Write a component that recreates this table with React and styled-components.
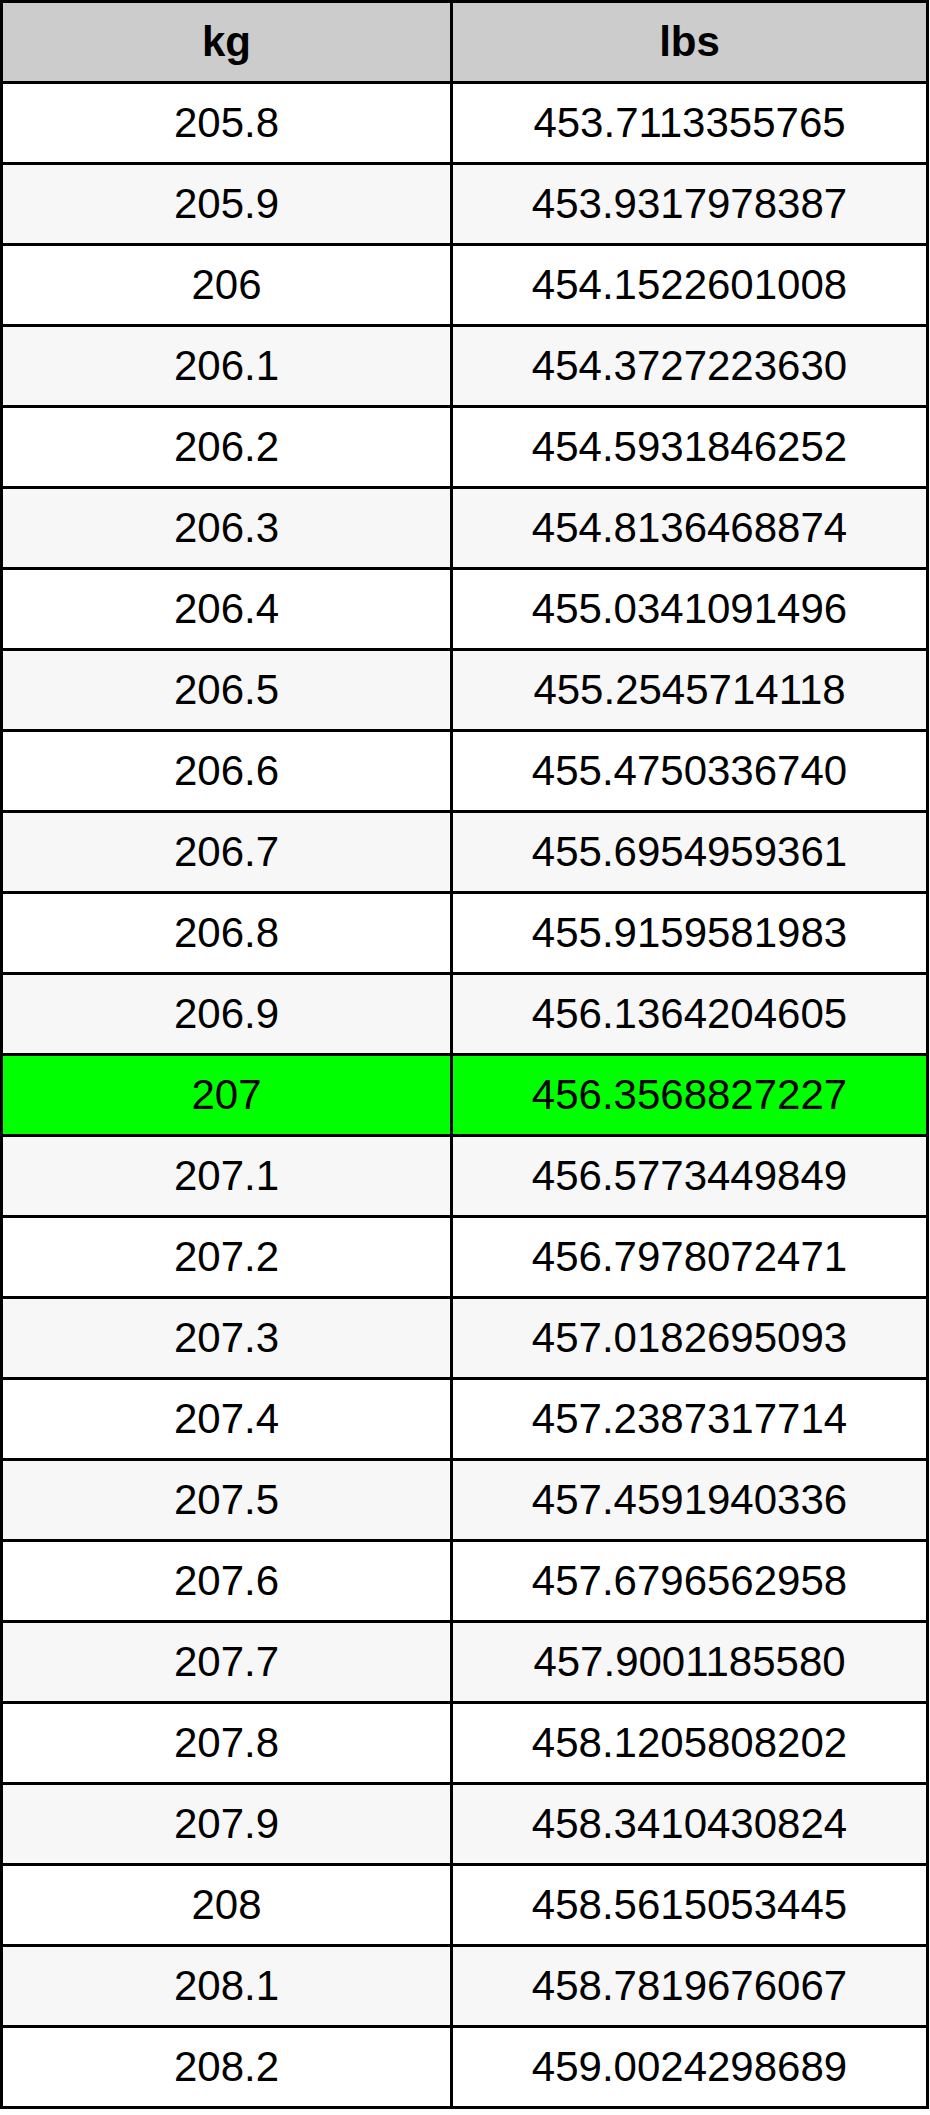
import styled, { createGlobalStyle } from 'styled-components';

const GlobalStyle = createGlobalStyle`
  html, body {
    margin: 0;
    padding: 0;
    background: #fff;
  }
`;

const rows = [
  ['205.8', '453.7113355765'],
  ['205.9', '453.9317978387'],
  ['206', '454.1522601008'],
  ['206.1', '454.3727223630'],
  ['206.2', '454.5931846252'],
  ['206.3', '454.8136468874'],
  ['206.4', '455.0341091496'],
  ['206.5', '455.2545714118'],
  ['206.6', '455.4750336740'],
  ['206.7', '455.6954959361'],
  ['206.8', '455.9159581983'],
  ['206.9', '456.1364204605'],
  ['207', '456.3568827227'],
  ['207.1', '456.5773449849'],
  ['207.2', '456.7978072471'],
  ['207.3', '457.0182695093'],
  ['207.4', '457.2387317714'],
  ['207.5', '457.4591940336'],
  ['207.6', '457.6796562958'],
  ['207.7', '457.9001185580'],
  ['207.8', '458.1205808202'],
  ['207.9', '458.3410430824'],
  ['208', '458.5615053445'],
  ['208.1', '458.7819676067'],
  ['208.2', '459.0024298689'],
];

const Table = styled.table`
  border-collapse: separate;
  border-spacing: 0;
  border-left: 3px solid #000;
  border-top: 3px solid #000;
  font-family: 'Liberation Sans', Arial, sans-serif;
  color: #000;
  table-layout: fixed;
`;

const HeadCell = styled.th`
  width: ${(p) => p.$w}px;
  height: 81px;
  padding: 0;
  box-sizing: border-box;
  background: #cccccc;
  border-right: 3px solid #000;
  border-bottom: 3px solid #000;
  font-size: 42px;
  font-weight: bold;
  text-align: center;
  vertical-align: middle;
  line-height: 1;
`;

const Row = styled.tr`
  background: ${(p) => (p.$hl ? '#00ff00' : p.$odd ? '#f7f7f7' : '#ffffff')};
`;

const Cell = styled.td`
  height: 81px;
  padding: 0;
  box-sizing: border-box;
  border-right: 3px solid #000;
  border-bottom: 3px solid #000;
  font-size: 42px;
  text-align: center;
  vertical-align: middle;
  line-height: 1;
`;

export default function App() {
  return (
    <>
      <GlobalStyle />
      <Table>
        <thead>
          <tr>
            <HeadCell $w={450}>kg</HeadCell>
            <HeadCell $w={476}>lbs</HeadCell>
          </tr>
        </thead>
        <tbody>
          {rows.map(([kg, lbs], i) => (
            <Row key={kg} $odd={i % 2 === 1} $hl={kg === '207'}>
              <Cell>{kg}</Cell>
              <Cell>{lbs}</Cell>
            </Row>
          ))}
        </tbody>
      </Table>
    </>
  );
}
